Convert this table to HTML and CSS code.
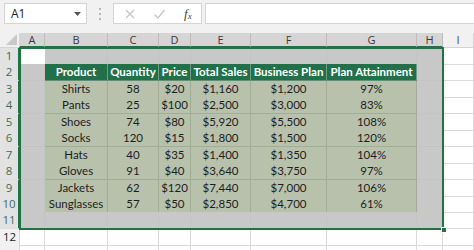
FILE: index.html
```html
<!DOCTYPE html>
<html>
<head>
<meta charset="utf-8">
<link rel="stylesheet" href="styles.css">
</head>
<body>
<div class="app">
  <div class="toolbar">
    <div class="namebox"><span>A1</span>
      <svg class="caret" width="7" height="4" viewBox="0 0 7 4"><path d="M0 0H7L3.5 4Z" fill="#555"/></svg>
    </div>
    <div class="grip"><i></i><i></i><i></i></div>
    <div class="fxbox">
      <svg class="ico" width="12" height="12" viewBox="0 0 12 12"><path d="M2 2L10 10M10 2L2 10" stroke="#c4c4c4" stroke-width="1.2" fill="none"/></svg>
      <svg class="ico" width="13" height="12" viewBox="0 0 13 12"><path d="M1.5 6.5L5 10L11.5 2" stroke="#c4c4c4" stroke-width="1.2" fill="none"/></svg>
      <span class="fx">f<sub>x</sub></span>
    </div>
    <div class="formula"></div>
  </div>

  <div class="sheet">
    <div class="hrow">
      <div class="corner"><svg width="11" height="11" viewBox="0 0 11 11"><path d="M11 0V11H0Z" fill="#c9c9c9"/></svg></div>
      <div class="ch sel">A</div><div class="ch sel">B</div><div class="ch sel">C</div><div class="ch sel">D</div><div class="ch sel">E</div><div class="ch sel">F</div><div class="ch sel">G</div><div class="ch sel">H</div><div class="ch">I</div>
    </div>

    <div class="row">
      <div class="rh sel">1</div>
      <div class="c active"></div><div class="c g"></div><div class="c g"></div><div class="c g"></div><div class="c g"></div><div class="c g"></div><div class="c g"></div><div class="c g"></div><div class="c"></div>
    </div>
    <div class="row">
      <div class="rh sel">2</div>
      <div class="c g"></div><div class="c th">Product</div><div class="c th">Quantity</div><div class="c th">Price</div><div class="c th">Total Sales</div><div class="c th">Business Plan</div><div class="c th">Plan Attainment</div><div class="c g"></div><div class="c"></div>
    </div>
    <div class="row">
      <div class="rh sel">3</div>
      <div class="c g"></div><div class="c td">Shirts</div><div class="c td">58</div><div class="c td">$20</div><div class="c td">$1,160</div><div class="c td">$1,200</div><div class="c td">97%</div><div class="c g"></div><div class="c"></div>
    </div>
    <div class="row">
      <div class="rh sel">4</div>
      <div class="c g"></div><div class="c td">Pants</div><div class="c td">25</div><div class="c td">$100</div><div class="c td">$2,500</div><div class="c td">$3,000</div><div class="c td">83%</div><div class="c g"></div><div class="c"></div>
    </div>
    <div class="row">
      <div class="rh sel">5</div>
      <div class="c g"></div><div class="c td">Shoes</div><div class="c td">74</div><div class="c td">$80</div><div class="c td">$5,920</div><div class="c td">$5,500</div><div class="c td">108%</div><div class="c g"></div><div class="c"></div>
    </div>
    <div class="row">
      <div class="rh sel">6</div>
      <div class="c g"></div><div class="c td">Socks</div><div class="c td">120</div><div class="c td">$15</div><div class="c td">$1,800</div><div class="c td">$1,500</div><div class="c td">120%</div><div class="c g"></div><div class="c"></div>
    </div>
    <div class="row">
      <div class="rh sel">7</div>
      <div class="c g"></div><div class="c td">Hats</div><div class="c td">40</div><div class="c td">$35</div><div class="c td">$1,400</div><div class="c td">$1,350</div><div class="c td">104%</div><div class="c g"></div><div class="c"></div>
    </div>
    <div class="row">
      <div class="rh sel">8</div>
      <div class="c g"></div><div class="c td">Gloves</div><div class="c td">91</div><div class="c td">$40</div><div class="c td">$3,640</div><div class="c td">$3,750</div><div class="c td">97%</div><div class="c g"></div><div class="c"></div>
    </div>
    <div class="row">
      <div class="rh sel">9</div>
      <div class="c g"></div><div class="c td">Jackets</div><div class="c td">62</div><div class="c td">$120</div><div class="c td">$7,440</div><div class="c td">$7,000</div><div class="c td">106%</div><div class="c g"></div><div class="c"></div>
    </div>
    <div class="row">
      <div class="rh sel">10</div>
      <div class="c g"></div><div class="c td">Sunglasses</div><div class="c td">57</div><div class="c td">$50</div><div class="c td">$2,850</div><div class="c td">$4,700</div><div class="c td">61%</div><div class="c g"></div><div class="c"></div>
    </div>
    <div class="row">
      <div class="rh sel">11</div>
      <div class="c g"></div><div class="c g"></div><div class="c g"></div><div class="c g"></div><div class="c g"></div><div class="c g"></div><div class="c g"></div><div class="c g"></div><div class="c"></div>
    </div>
    <div class="row">
      <div class="rh dark">12</div>
      <div class="c"></div><div class="c"></div><div class="c"></div><div class="c"></div><div class="c"></div><div class="c"></div><div class="c"></div><div class="c"></div><div class="c"></div>
    </div>
    <div class="row">
      <div class="rh"></div>
      <div class="c"></div><div class="c"></div><div class="c"></div><div class="c"></div><div class="c"></div><div class="c"></div><div class="c"></div><div class="c"></div><div class="c"></div>
    </div>

    <div class="selection"><span class="handle"></span></div>
  </div>
</div>
</body>
</html>
```

FILE: styles.css
```css
* { box-sizing: border-box; }
html, body { margin: 0; padding: 0; background: #fff; }
body { width: 474px; height: 250px; overflow: hidden; font-family: "Open Sans", "Noto Sans", sans-serif; }

.app { width: 474px; height: 250px; overflow: hidden; }

.toolbar {
  height: 33px;
  background: #f1f1f1;
  display: flex;
  align-items: flex-start;
  padding: 3px 0 0 4px;
}
.namebox {
  width: 83px; height: 21px;
  background: #fff;
  border: 1px solid #d4d4d4;
  display: flex; align-items: center; justify-content: space-between;
  padding: 0 5px 0 6px;
  font-size: 12px; color: #222;
}
.caret { margin-top: 1px; }
.grip {
  width: 26px; height: 21px;
  display: flex; flex-direction: column; align-items: center; justify-content: center; gap: 3px;
}
.grip i { display: block; width: 2px; height: 2px; background: #b5b5b5; }
.fxbox {
  width: 89px; height: 21px;
  background: #fff;
  border: 1px solid #d4d4d4;
  display: flex; align-items: center;
  padding: 0 0 0 10px;
  gap: 17px;
}
.fx {
  font-family: "Liberation Serif", "DejaVu Serif", serif;
  font-style: italic; font-size: 13px; color: #444; line-height: 1;
  margin-left: 1px;
}
.fx sub { font-size: 9px; vertical-align: -1px; margin-left: 0; }
.formula {
  flex: 1; height: 21px; margin-left: 3px;
  background: #fff;
  border: 1px solid #d4d4d4; border-right: none;
}

.sheet { position: relative; }

.hrow, .row {
  display: grid;
  grid-template-columns: 20px 25px 63px 51px 32px 60px 76px 90px 26px 31px;
}
.hrow { height: 15px; background: #f1f1f1; }
.row { height: 16.45px; }

.corner {
  background: #f1f1f1; border-right: 1px solid #d4d4d4; border-bottom: 1px solid #d4d4d4;
  display: flex; align-items: flex-end; justify-content: flex-end; padding: 0 2px 2px 0;
}
.ch {
  font-size: 11px; color: #444; line-height: 13px; text-align: center;
  background: #f1f1f1;
  border-right: 1px solid #d4d4d4;
  border-bottom: 1px solid #d4d4d4;
}
.ch.sel { background: #d5d5d5; border-right-color: #bcbcbc; border-bottom: 2px solid #217346; color: #3a3a3a; }

.rh {
  font-size: 11.5px; color: #444; text-align: center; line-height: 16px;
  background: #f1f1f1;
  border-right: 1px solid #d4d4d4;
  border-bottom: 1px solid #e0e0e0;
}
.rh.sel { background: #e2e2e2; color: #3f6e58; border-right: 2px solid #217346; }
.rh.dark { color: #222; }

.c {
  border-right: 1px solid #dadada;
  border-bottom: 1px solid #dadada;
  font-size: 11.5px; line-height: 15px; text-align: center; color: #1e1e1e;
  white-space: nowrap; overflow: hidden;
  font-family: "Lato", "Open Sans", sans-serif;
}
.c.g { background: #c8c8c8; border-color: #c4c4c4; }
.c.active { background: #fff; border-color: #fff; }
.c.th { background: #21704a; color: #fff; font-weight: bold; border-right-color: #6f9a84; border-bottom-color: #5f8f76; }
.c.td { background: #b7c1ac; border-right-color: #a2ad97; border-bottom-color: #a2ad97; }

.selection {
  position: absolute;
  left: 19px; top: 14px;
  width: 425px; height: 183px;
  border: 2px solid #217346;
  pointer-events: none;
}
.handle {
  position: absolute; right: -5px; bottom: -5px;
  width: 6px; height: 6px; background: #217346; border: 1px solid #fff;
}
```
